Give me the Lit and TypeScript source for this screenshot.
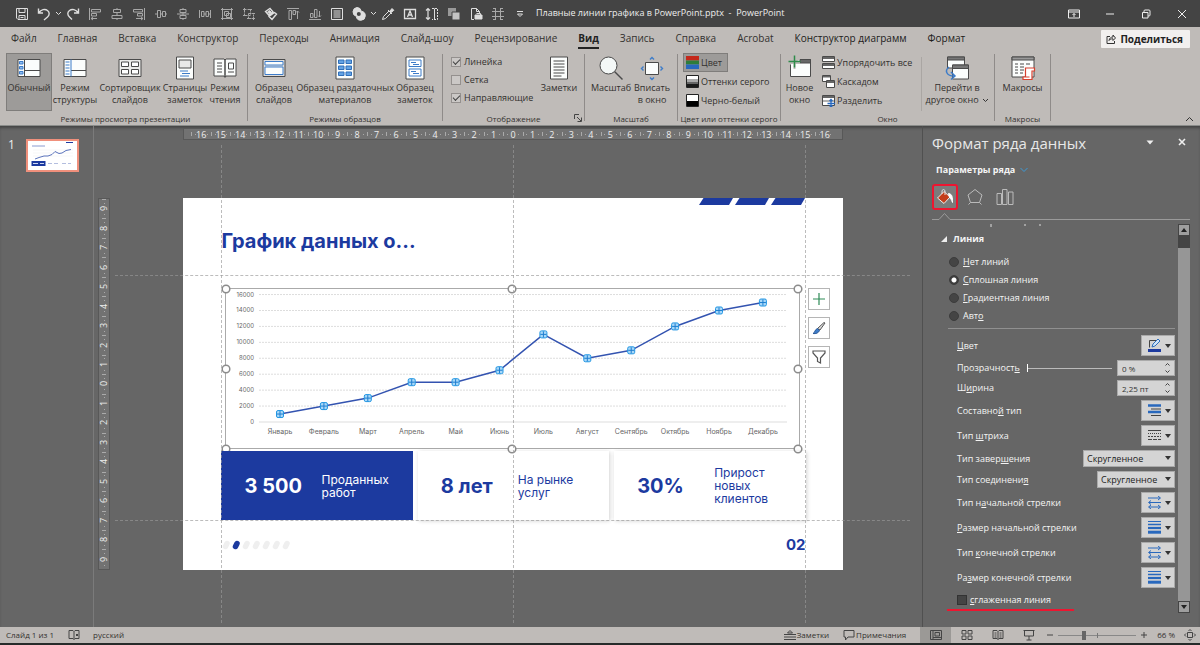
import { LitElement, html, svg, css } from "lit";
import { customElement, state } from "lit/decorators.js";
import { classMap } from "lit/directives/class-map.js";

const W = "#dedede";

/* Quick access toolbar glyphs, 14 x 14 */
const qat: Record<string, unknown> = {
  save: svg`<path d="M1.5 1.5h11v11H3l-1.5-1.5z M4 1.5v4h6v-4 M4 12.500V8.500h6v4 M5.500 10.500h3"/>`,
  undo: svg`<path d="M1.500 1.500v4.500h4.500 M2 5.500C4 2.500 8 1.500 10.500 3.500s2 4.500 0 6.500l-3.500 3" stroke-width="1.400"/>`,
  redo: svg`<path d="M12.500 1.500v4.500H8 M12 5.500C10 2.500 6 1.500 3.500 3.500s-2 4.500 0 6.500L6 12.500" stroke-width="1.400"/>`,
  alignLeft: svg`<path d="M1.500 1v12 M3.500 2.500h9v2.500h-9z M3.500 6.500h5v2.500h-5z M3 11.500h6 M5 10l-2 1.500 2 1.500"/>`,
  alignMid: svg`<path d="M7 1v1.500 M7 5.500v2.500 M7 11.500V13 M3.500 2.500h7v3h-7z M2 8.500h10v3H2z"/>`,
  alignRight: svg`<path d="M12.500 1v12 M1.500 2.500h9v2.500h-9z M5.500 6.500h5v2.500h-5z M4 11.500h7 M9 10l2 1.500-2 1.500"/>`,
  centerV: svg`<path d="M1 7h2 M11.500 7H13 M3.500 3.500h3v7h-3z M8.500 4.500h3v5h-3z M6.500 7h2"/>`,
  centerH: svg`<path d="M7 1v1.500 M7 11.500V13 M4 2.500h6v3H4z M4 8.500h6v3H4z M7 5.500v3 M1 7h12"/>`,
  distribute: svg`<path d="M1.500 3v8 M12.500 3v8 M3.500 4.500h2.500v5H3.500z M8 4.500h2.500v5H8z M6 7h2 M11 7h2"/>`,
  group: svg`<path d="M2.500 2.500h9v9h-9z M4.500 4.500h4v4h-4z M6.500 6.500h4v4h-4z M1 2.500h3 M2.500 1v3 M10 2.500h3 M11.500 1v3 M1 11.500h3 M2.500 10v3 M10 11.500h3 M11.500 10v3"/>`,
  ungroup: svg`<path d="M2.500 2.500h6v6h-6z M6.500 6.500h5v5h-5z" stroke-dasharray="2 1"/><path d="M1 2.500h3 M2.500 1v3 M7 2.500h3 M10 11.500h3 M11.500 10v3 M5 11.500h3 M1 8.500h3 M10 6.500h3"/>`,
  paint: svg`<path d="M1.500 4.500L6 1.500l3 3.500-4 3.500z M5 9.500l3 3 4.500-5.500-2-1.500z" stroke-width="1.400"/><path d="M3.500 5l2-1.500 2 2L5.500 7z" fill="${W}"/>`,
  alignTop: svg`<path d="M1 1.500h12 M3 3.500h2.500v9H3z M7 3.500h2.500v4H7z M11.500 12V4 M10 5.500L11.500 4 13 5.500"/>`,
  alignBottom: svg`<path d="M1 12.500h12 M2.500 6.500H5v4H2.500z M6.500 2.500H9v8H6.500z M11.500 4v6 M10 8.500l1.500 1.500L13 8.500"/>`,
  textbox: svg`<path d="M1.500 1.500h11v11h-11z M3.500 4h7 M3.500 6h7 M3.500 8h7 M3.500 10h7"/>`,
  shapes: svg`<path d="M5 .5a4.500 4.500 0 0 1 4.300 3.800a4.500 4.500 0 1 1-5 5A4.500 4.500 0 0 1 5 .5z" fill="${W}"/><circle cx="6.800" cy="7" r="2" fill="#444" stroke="none"/>`,
  dropper: svg`<path d="M1.500 12.500l1-3 5.500-5.500 2 2-5.500 5.500z M7 3l4 4" /><path d="M8.500 4.500l2.500-3 1.800 1.800-3 2.500z" fill="${W}"/>`,
  textA: svg`<path d="M1.500 2.500h11v9h-11z M4.500 10L7 4l2.500 6 M5.500 8h3" stroke-width="1.300"/>`,
  size: svg`<path d="M3 1.500v11 M1 3.500l2-2 2 2 M1 10.500l2 2 2-2" stroke-width="1.200"/><path d="M7 1.500h5.500v11H7" stroke-dasharray="2 1"/><path d="M9.500 1.500v11"/>`,
  layers: svg`<path d="M1 1h8v8H1z" fill="#999" stroke="none"/><path d="M5 5h8v8H5z" fill="#c4c4c4" stroke="#444"/>`,
  docPrint: svg`<path d="M5 12.500H2.500v-11h5l3 3V6 M7.500 1.500v3h3"/><path d="M6 8h7v4H6z" fill="${W}"/><path d="M7.500 6.500h4v2"/>`,
  grid: svg`<path d="M1 4.500h12 M1 9.500h12 M4.500 1v12 M9.500 1v12 M2 1.500h3 M2 12.500h3 M9 1.500h3 M9 12.500h3"/>`,
};
const muted = new Set(["alignLeft", "alignMid", "alignRight", "centerV", "centerH", "distribute", "group", "ungroup", "alignTop", "alignBottom", "grid"]);

/* Ribbon glyphs on a 24 x 24 field */
const O = "#4a4a4a";
const B = "#3d7cc9";
const big: Record<string, unknown> = {
  normal: svg`<path d="M1 3.500h22v17H1z" fill="#fbfdfc" stroke="${O}"/><path d="M7.500 3.500v17 M7.500 14.500H23" stroke="${O}"/><path d="M2.500 5.500h3.500v2.500H2.500z M2.500 10.500h3.500v2.500H2.500z M2.500 15.500h3.500v2.500H2.500z" fill="#8dbcf0" stroke="${B}"/>`,
  outline: svg`<path d="M1 3.500h22v17H1z" fill="#fbfdfc" stroke="${O}"/><path d="M8 14.500H23" stroke="${O}"/><path d="M8 3.500v17 M2.500 6h4 M2.500 9h4 M2.500 12h4 M2.500 15h4 M2.500 18h4" stroke="${B}"/>`,
  sorter: svg`<path d="M1 3.500h22v17H1z" fill="#ececea" stroke="${O}"/><path d="M3.500 6h7v4.500h-7z M13.500 6h7v4.500h-7z M3.500 13.500h7V18h-7z M13.500 13.500h7V18h-7z" fill="#fff" stroke="${O}"/>`,
  notes: svg`<path d="M3.500 1h17v22h-17z" fill="#fbfdfc" stroke="${O}"/><path d="M6 4h12v8H6z" fill="#e8e8e8" stroke="${O}"/><path d="M7 15h8 M9 17.500h8 M7 20h9" stroke="${B}"/>`,
  reading: svg`<path d="M1 3h10l1 1 1-1h10v17H13l-1 1.500-1-1.500H1z" fill="#fbfdfc" stroke="${O}"/><path d="M12 4v17" stroke="${O}" stroke-width="1.500"/><path d="M4 7h5 M4 10h5 M4 13h5 M4 16h5 M15.500 7h5v6h-5z M15 16h6" stroke="${O}"/>`,
  master: svg`<path d="M1 3.500h22v17H1z" fill="#ddd" stroke="${O}"/><path d="M3 5.500h18V9H3z M3 11h18v7.500H3z" fill="#fbfdfc" stroke="${B}"/>`,
  handout: svg`<path d="M3 1h18v22H3z" fill="#fbfdfc" stroke="${O}"/><path d="M5.500 4h5.500v3.500H5.500z M13 4h5.500v3.500H13z M5.500 10h5.500v3.500H5.500z M13 10h5.500v3.500H13z M5.500 16h5.500v3.500H5.500z M13 16h5.500v3.500H13z" fill="#62a2e4" stroke="#2f6fba"/>`,
  notesMaster: svg`<path d="M3 1h18v22H3z" fill="#fbfdfc" stroke="${O}"/><path d="M6 4h12v6.500H6z M6 13h12v7H6z" fill="#fff" stroke="${B}"/><path d="M8 6.500h5 M10 8.500h6 M8 15.500h5 M10 17.500h6" stroke="${B}"/>`,
  page: svg`<path d="M3.500 1h17v22h-17z" fill="#fbfdfc" stroke="${O}"/><path d="M6.500 5h11 M6.500 8h11 M6.500 11h11 M6.500 14h11 M6.500 17h11 M6.500 20h8" stroke="${O}"/>`,
  zoom: svg`<path d="M15.500 15.500l8 8" stroke="${O}" stroke-width="1.500"/><circle cx="9.500" cy="9.500" r="8.500" fill="#f4f8f7" stroke="${O}"/>`,
  fit: svg`<path d="M5.500 6.500h13v12h-13z" fill="#fbfdfc" stroke="${O}"/><path d="M10 3.500l2-2 2 2 M10 21.500l2 2 2-2 M3.500 10.500l-2 2 2 2 M20.500 10.500l2 2-2 2" stroke="${B}" stroke-width="1.400"/>`,
  newWin: svg`<path d="M2.500 8.500V20.500h20V3.500H12" fill="#fbfdfc" stroke="${O}"/><path d="M12 3.500h10.500v3.500H12z" fill="#666" stroke="${O}"/><path d="M-1 5.500H12V8H7.500v5h-2V8H-1z" fill="#bfbbb8"/><path d="M6.500 -.5v12 M.5 5.500h12" stroke="#2e8b4a" stroke-width="1.500"/>`,
  switchWin: svg`<path d="M2.500 1h17v11h-17z" fill="#fbfdfc" stroke="${O}"/><path d="M2.500 1h17v3h-17z" fill="#777" stroke="${O}"/><path d="M7.500 9h16v14h-16z" fill="#fbfdfc" stroke="${O}"/><path d="M7.500 9h16v3.500h-16z" fill="#777" stroke="${O}"/><path d="M4 11c-5 4-2 9 5 9 M6 16l4 4-4 3.500" stroke="${B}" stroke-width="1.500"/>`,
  macro: svg`<path d="M1 1h22v20H1z" fill="#fbfdfc" stroke="${O}"/><path d="M1 1h22v3H1z" fill="#999" stroke="${O}"/><path d="M4 8h3 M9 8h4 M15 8h4 M4 11h3 M9 11h4 M4 14h3 M9 14h4 M4 17h3 M9 17h3" stroke="${O}"/><path d="M14.500 12h9v3h-2.500v8.500h-9V21h2.500z M14.500 21h4" fill="#fff" stroke="#d8402f" stroke-width="1.200"/>`,
};

/* Small ribbon glyphs on a 13 x 13 field */
const small: Record<string, unknown> = {
  color: svg`<path d="M0 0h13v4.500H0z" fill="#c4281b"/><path d="M0 4.500h13v4H0z" fill="#2e7d3a"/><path d="M0 8.500h13V13H0z" fill="#2868bd"/>`,
  gray: svg`<path d="M.5.5h12v12H.5z" fill="#fff" stroke="#222"/><path d="M1 4h11v3H1z" fill="#aaa"/><path d="M1 7h11v2H1z" fill="#666"/><path d="M1 9h11v3H1z" fill="#1a1a1a"/>`,
  bw: svg`<path d="M.5.5h12v12H.5z" fill="#fff" stroke="#222"/><path d="M1 7h11v5H1z" fill="#000"/>`,
  arrange: svg`<path d="M.5.5h12v5H.5z M.5 7.500h12v5H.5z" fill="#fff" stroke="${O}"/><path d="M1 1h11v2H1z M1 8h11v2H1z" fill="#666"/>`,
  cascade: svg`<path d="M.5.500h8v6h-8z M4.500 5.500h8v7h-8z" fill="#fff" stroke="${O}"/><path d="M1 1h7v1.500H1z M5 6h7v2H5z" fill="#666"/>`,
  split: svg`<path d="M.5 1.500h12v10H.5z" fill="#fff" stroke="${O}"/><path d="M1 2h11v2H1z M1 6.500h11v1H1z" fill="#666"/><path d="M9 5.500v7.500 M5.500 9.500H13 M7.500 7L9 5.500 10.500 7 M7.500 11.500L9 13l1.500-1.500" fill="none" stroke="#2868bd" stroke-width="1.300"/>`,
};

const caret = html`<svg class="caret" viewBox="0 0 6 4"><path d="M0 0h6L3 4z" fill="#333" /></svg>`;
const chevron = (c: string) => html`<svg class="chev" viewBox="0 0 7 5"><path d="M1 1l2.500 2.500L6 1" fill="none" stroke="${c}" /></svg>`;

const months = ["Январь", "Февраль", "Март", "Апрель", "Май", "Июнь", "Июль", "Август", "Сентябрь", "Октябрь", "Ноябрь", "Декабрь"];
const values = [1000, 2000, 3000, 5000, 5000, 6500, 11000, 8000, 9000, 12000, 14000, 15000];

@customElement("app-root")
export class AppRoot extends LitElement {
  @state() private line = 1;

  static styles = css`
    :host { display: flex; flex-direction: column; height: 100vh; min-height: 640px; overflow: hidden; background: #666; color: #33312f; font: 9px/12px "Open Sans", "Noto Sans", sans-serif; }
    * { box-sizing: border-box; }
    button, input, select { font: inherit; color: inherit; margin: 0; padding: 0; border: 0; background: none; border-radius: 0; }
    svg { display: block; flex: none; }
    .caret { width: 6px; height: 4px; }
    .chev { width: 7px; height: 5px; }

    .titlebar { flex: none; height: 27px; background: #444; color: #eee; display: flex; align-items: center; padding-left: 11px; }
    .qat { display: flex; align-items: center; }
    .qat button { width: 22px; height: 22px; display: grid; place-items: center; }
    .qat .drop { width: 7px; }
    .qat svg.g { width: 14px; height: 14px; fill: none; stroke: #dedede; }
    .qat svg.muted { stroke: #a8a8a8; }
    .doc { margin: 0 0 2px 5px; flex: 1; white-space: nowrap; }
    .win { display: flex; }
    .win button { width: 36px; height: 26px; display: grid; place-items: center; }
    .win svg { width: 12px; height: 12px; fill: none; stroke: #eee; }

    .tabs { flex: none; height: 24px; background: #bfbbb8; display: flex; align-items: center; gap: 21px; padding: 0 10px 0 11px; font-size: 10px; line-height: 14px; white-space: nowrap; }
    .tabs a { color: #33312f; text-decoration: none; padding: 2px 0; border-bottom: 2px solid transparent; }
    .tabs a.on { font-weight: 700; color: #222; border-bottom-color: #222; }
    .tabs a.ctx { color: #1d1c1b; }
    .share { margin-left: auto; height: 18px; padding: 0 7px 0 5px; background: #f2f0ef; color: #222; font-weight: 700; display: flex; align-items: center; gap: 4px; border-radius: 1px; }
    .share svg { width: 10px; height: 10px; fill: none; stroke: #333; }

    .ribbon { flex: none; height: 75px; background: #bfbbb8; display: flex; padding: 2px 6px 3px 4px; border-bottom: 1px solid #8a8c8a; }
    .group { position: relative; display: flex; flex-direction: column; border-right: 1px solid #8f8b89; margin: 1px 0; padding: 0 2px; }
    .group .body { flex: 1; display: flex; margin-top: -1px; }
    .group h2 { margin: 0 0 -4px; font: 8px/12px "Open Sans", sans-serif; text-align: center; white-space: nowrap; }
    .g1 { width: 244px; } .g2 { width: 195px; } .g3 { width: 142px; } .g4 { width: 93px; }
    .g5 { width: 103px; } .g6 { width: 214px; } .g7 { width: 56px; }
    .big { height: 58px; border: 1px solid transparent; display: flex; flex-direction: column; align-items: center; gap: 2px; padding-top: 2px; white-space: nowrap; overflow: visible; }
    .big svg.b { width: 24px; height: 24px; fill: none; overflow: visible; }
    .big .lb { display: flex; justify-content: center; align-items: center; gap: 3px; }
    .big.on { background: #9d9b99; border-color: #7f7d7b; }
    .w34 { width: 34px; } .w44 { width: 44px; } .w46 { width: 46px; } .w48 { width: 48px; } .w64 { width: 64px; } .w94 { width: 94px; } .w72 { width: 72px; } .w52 { width: 52px; }
    .checks { display: flex; flex-direction: column; gap: 6px; padding: 3px 0 0 6px; width: 92px; }
    .checks label { display: flex; align-items: center; gap: 3px; height: 12px; white-space: nowrap; }
    .checks input { appearance: none; width: 10px; height: 10px; border: 1px solid #94908e; background: #cbc8c6; display: grid; place-items: center; }
    .checks input:checked::after { content: ""; width: 6px; height: 3px; border: solid #444; border-width: 0 0 1px 1px; transform: rotate(-45deg); margin-top: -2px; }
    .launch { position: absolute; right: 2px; bottom: -1px; width: 8px; height: 8px; }
    .launch svg { width: 8px; height: 8px; fill: none; stroke: #444; }
    .list { display: flex; flex-direction: column; align-items: flex-start; padding: 0 3px 0; }
    .list button { height: 19px; display: flex; align-items: center; gap: 2px; padding: 0 5px 0 2px; white-space: nowrap; border: 1px solid transparent; }
    .list button.on { background: #9d9b99; border-color: #7f7d7b; }
    .list svg { width: 13px; height: 13px; }
    .sep { width: 1px; margin: 4px 0 2px auto; background: #aaa6a3; }
    .collapse { margin: auto 0 -1px auto; width: 9px; height: 9px; }
    .collapse svg { width: 9px; height: 6px; fill: none; stroke: #333; }

    .work { flex: 1; min-height: 0; display: grid; grid-template-columns: 94px 1fr 278px; box-shadow: inset 0 3px 3px -1px #444; }
    .thumbs { display: flex; align-items: flex-start; gap: 11px; padding: 13px 0 0 8px; color: #eee; border-right: 1px solid #7b7b7b; font-size: 12px; line-height: 12px; }
    .thumb { width: 53px; height: 33px; border: 2px solid #f0907c; background: #fff; padding: 1px; }
    .thumb svg { width: 47px; height: 27px; }

    .canvas { min-width: 0; display: grid; grid-template: 19px 1fr / 20px 1fr; padding: 0 12px 4px 2px; }
    .hr { grid-column: 2; justify-self: center; width: 83%; height: 12px; margin-top: 2px; }
    .vr { grid-row: 2; align-self: center; height: 372px; width: 12px; margin-left: 2px; }
    .hr, .vr { display: flex; background: #727272; border: 1px solid #585858; color: #eee; font: 9px/9px "Open Sans", sans-serif; }
    .hr { padding: 0 7px; }
    .vr { flex-direction: column; }
    .hr span, .vr span { flex: 1 1 0; min-width: 0; min-height: 0; display: flex; align-items: center; justify-content: center; background-repeat: no-repeat; background-image: linear-gradient(#aaa, #aaa), linear-gradient(#aaa, #aaa), linear-gradient(#aaa, #aaa); }
    .hr span { background-size: 1px 4px, 1px 1px, 1px 1px; background-position: 0 50%, 20% 50%, 82% 50%; }
    .vr span { background-size: 4px 1px, 1px 1px, 1px 1px; background-position: 50% 0, 50% 20%, 50% 82%; }
    .vr i { font-style: normal; transform: rotate(-90deg); }
    .stage { grid-area: 2 / 2; display: flex; align-items: center; justify-content: center; }
    .slide { position: relative; width: 83%; aspect-ratio: 659 / 372; background: #fff; color: #1c3a9f; font-family: Inter, "Open Sans", sans-serif; display: flex; flex-direction: column; padding: 0 37px 0 38px; }
    .stripes { align-self: flex-end; display: flex; gap: 2px; margin-right: 1px; }
    .stripes svg { width: 34px; height: 7px; }
    .slide h1 { margin: 23px 0 0; font-size: 20px; line-height: 26px; font-weight: 700; white-space: nowrap; }
    .chart { margin: 34px 6px 0 4px; border: 1px solid #aaa; }
    .chart svg { width: 100%; overflow: visible; }
    .axis { font: 6px Inter, sans-serif; fill: #666; }
    .month { font: 7px Inter, sans-serif; fill: #666; }
    .stats { display: grid; grid-template-columns: 1fr 1fr 1fr; gap: 5px; margin-top: 2px; }
    .stat { height: 69px; display: grid; grid-template-columns: 77px 1fr; align-items: center; padding-left: 23px; box-shadow: 1px 1px 4px rgba(0,0,0,.18); font-size: 12px; line-height: 13px; }
    .stat b { font-size: 20px; line-height: 24px; font-weight: 700; white-space: nowrap; }
    .stat.fill { background: #1c3a9f; color: #fff; box-shadow: none; }
    .foot { display: flex; justify-content: space-between; align-items: center; margin-top: 15px; height: 20px; font-size: 15px; font-weight: 700; }
    .dots { display: flex; gap: 1px; padding-left: 1px; }
    .dots svg { width: 9px; height: 10px; overflow: visible; }
    .guide { position: absolute; opacity: .65; }
    .v { top: -53px; bottom: -53px; border-left: 1px dashed #999; }
    .h { left: -68px; right: -67px; border-top: 1px dashed #999; }
    .v1 { left: 38px; } .v2 { left: 50%; } .v3 { right: 37px; }
    .h1 { top: 77px; } .h2 { top: 322px; }
    .tools { position: absolute; left: calc(100% - 35px); top: 90px; display: grid; gap: 7px; }
    .tools button { width: 22px; height: 22px; background: #fff; border: 1px solid #b5b5b5; display: grid; place-items: center; }
    .tools svg { width: 14px; height: 14px; fill: none; }

    .panel { border-left: 1px solid #505050; padding: 7px 10px 0 9px; color: #f4f4f4; display: flex; flex-direction: column; min-width: 0; }
    .phead { display: flex; align-items: center; height: 21px; }
    .phead h2 { margin: 0; flex: 1; font-size: 15px; line-height: 21px; font-weight: 400; color: #e8e8e8; white-space: nowrap; }
    .phead button { width: 12px; height: 12px; display: grid; place-items: center; margin-bottom: 3px; }
    .phead button + button { margin: 0 2px 3px 20px; }
    .opt { align-self: flex-start; display: flex; align-items: center; gap: 5px; font-weight: 700; margin: 9px 0 0 4px; height: 14px; white-space: nowrap; }
    .ptabs { display: flex; gap: 4px; margin-top: 7px; }
    .ptabs button { width: 26px; height: 26px; display: grid; place-items: center; }
    .ptabs button.on { border: 2px solid #ee1530; border-radius: 3px; background: #7b7b7b; }
    .ptabs svg { width: 18px; height: 18px; fill: none; stroke: #bbb; }
    .notch { height: 9px; width: 100%; margin-top: 2px; }
    .notch svg { width: 100%; height: 9px; }
    .pbody { display: flex; justify-content: space-between; margin-top: 3px; height: 389px; }
    .form { flex: 1; padding: 0 3px 0 16px; }
    .cut { height: 4px; width: 100px; margin-left: 40px; }
    .form h3 { margin: 4px 0 10px -7px; font-size: 9px; line-height: 14px; font-weight: 700; display: flex; align-items: center; gap: 6px; }
    .form h3 svg { width: 6px; height: 6px; }
    .radios { display: grid; gap: 6px; padding-left: 1px; }
    .radios label { display: flex; align-items: center; gap: 4px; height: 12px; }
    .radios input { appearance: none; width: 10px; height: 10px; border-radius: 50%; background: #444; border: 1px solid #3c3c3c; }
    .radios input:checked { background: radial-gradient(circle, #fff 2px, #3c3c3c 3px); }
    hr { border: 0; height: 1px; background: #909090; margin: 6px 0 6px; }
    .rows { display: grid; gap: 4px; padding-left: 9px; }
    .row { display: flex; align-items: center; justify-content: space-between; white-space: nowrap; }
    .pick { width: 34px; height: 21px; background: #d4d4d4; border: 1px solid #aaa; display: flex; align-items: center; justify-content: space-between; padding: 0 3px 0 6px; }
    .pick svg:first-child { width: 13px; height: 13px; fill: none; }
    .num { width: 58px; height: 16px; background: #d4d4d4; border: 1px solid #aaa; color: #333; display: flex; align-items: center; font-size: 8px; }
    .num input { width: 46px; padding-left: 4px; height: 14px; }
    .num svg { width: 7px; height: 12px; fill: none; stroke: #444; }
    .slider { appearance: none; width: 85px; height: 12px; margin-left: auto; margin-right: 5px; background: linear-gradient(#bbb, #bbb) center / 100% 1px no-repeat; }
    .slider::-webkit-slider-thumb { appearance: none; width: 1px; height: 8px; background: #fff; }
    .sel { position: relative; height: 17px; display: grid; }
    .sel select { appearance: none; height: 17px; width: 78px; background: #d4d4d4; border: 1px solid #aaa; color: #222; padding-left: 3px; }
    .sel.wide select { width: 92px; }
    .sel .caret { position: absolute; right: 4px; top: 6px; pointer-events: none; }
    .smooth { display: inline-flex; align-items: center; gap: 3px; margin: 5px 0 0 -1px; padding: 0 23px 3px 10px; border-bottom: 2px solid #ee1530; white-space: nowrap; height: 18px; }
    .smooth input { appearance: none; width: 10px; height: 10px; background: #444; border: 1px solid #333; }
    .scroll { width: 12px; background: #969696; display: flex; flex-direction: column; margin-right: 0; }
    .scroll button { height: 12px; display: grid; place-items: center; background: #9e9e9e; border: 1px solid #444; }
    .scroll .knob { height: 12px; background: #444; }
    .scroll .track { flex: 1; }

    .status { flex: none; height: 18px; background: #bfbbb8; border-bottom: 2px solid #262b2a; display: flex; align-items: center; padding-left: 6px; font-size: 8px; white-space: nowrap; }
    .status button { display: flex; align-items: center; justify-content: center; gap: 1px; height: 16px; }
    .status svg { width: 12px; height: 12px; fill: none; stroke: #444; }
    .status .lang { margin-left: 13px; }
    .status .book { margin-left: 14px; }
    .status .n { margin-left: auto; }
    .status .c { margin: 0 14px 0 14px; }
    .status .view { width: 31px; }
    .view.on { background: #9b9996; }
    .status .zoomer { appearance: none; width: 78px; height: 12px; margin: 0 2px; background: linear-gradient(#777, #777) center / 1px 5px no-repeat, linear-gradient(#888, #888) center / 100% 1px no-repeat; }
    .status .zoomer::-webkit-slider-thumb { appearance: none; width: 4px; height: 9px; background: #666; }
    .pct { margin: 0 9px 0 7px; }
    .status .fitb { margin-right: 4px; }
  `;

  private big(icon: string, width: string, lines: string[], on = false, drop = false) {
    return html`<button class=${classMap({ big: true, [width]: true, on })}>
      <svg class="b" viewBox="0 0 24 24">${big[icon]}</svg>
      <span>${lines.map((l, i) => html`<span class="lb">${l}${drop && i === lines.length - 1 ? chevron("#333") : ""}</span>`)}</span>
    </button>`;
  }

  private small(icon: string, label: string, on = false) {
    return html`<button class=${classMap({ on })}><svg viewBox="0 0 13 13">${small[icon]}</svg>${label}</button>`;
  }

  private q(name: string, label: string) {
    return html`<button aria-label=${label}><svg class=${classMap({ g: true, muted: muted.has(name) })} viewBox="0 0 14 14">${qat[name]}</svg></button>`;
  }

  private titlebar() {
    const drop = html`<button class="drop" aria-label="Ещё">${chevron(W)}</button>`;
    return html`<header class="titlebar">
      <div class="qat">
        ${this.q("save", "Сохранить")}${this.q("undo", "Отменить")}${drop}${this.q("redo", "Повторить")}
        ${["alignLeft", "alignMid", "alignRight", "centerV", "centerH", "distribute", "group", "ungroup", "paint", "alignTop", "alignBottom", "textbox", "shapes"].map((n) => this.q(n, n))}
        ${drop}
        ${["dropper", "textA", "size", "layers", "docPrint", "grid"].map((n) => this.q(n, n))}
        <button aria-label="Настройка панели"><svg class="g" viewBox="0 0 14 14"><path d="M4 4.500h6" /><path d="M4.500 7h5L7 9.500z" /></svg></button>
      </div>
      <div class="doc">Плавные линии графика в PowerPoint.pptx&nbsp; -&nbsp; PowerPoint</div>
      <div class="win">
        <button aria-label="Лента"><svg viewBox="0 0 12 12"><path d="M.5 2h11v8H.5z M.5 4h11 M6 9V5.500 M4.500 7L6 5.500 7.500 7" /></svg></button>
        <button aria-label="Свернуть"><svg viewBox="0 0 12 12"><path d="M2 6h8" /></svg></button>
        <button aria-label="Восстановить"><svg viewBox="0 0 12 12"><path d="M2.500 4.500h5.500V10H2.500z M4 4.500V3q0-1 1-1h4q1 0 1 1v4q0 1-1 1H8" /></svg></button>
        <button aria-label="Закрыть"><svg viewBox="0 0 12 12"><path d="M2 2l8 8 M10 2l-8 8" /></svg></button>
      </div>
    </header>`;
  }

  private tabs() {
    const names = ["Файл", "Главная", "Вставка", "Конструктор", "Переходы", "Анимация", "Слайд-шоу", "Рецензирование", "Вид", "Запись", "Справка", "Acrobat", "Конструктор диаграмм", "Формат"];
    return html`<nav class="tabs">
      ${names.map((n, i) => html`<a href="#" class=${classMap({ on: n === "Вид", ctx: i > 11 })}>${n}</a>`)}
      <button class="share"><svg viewBox="0 0 10 10"><path d="M4 2.500H1v7h7.500V7 M3 6.500C3.500 4 5 3 7 3V1l2.500 3L7 6.500V4.800C5 4.800 4 5.200 3 6.500z" /></svg>Поделиться</button>
    </nav>`;
  }

  private ribbon() {
    return html`<div class="ribbon">
      <section class="group g1"><div class="body">
        ${this.big("normal", "w46", ["Обычный"], true)}${this.big("outline", "w46", ["Режим", "структуры"])}${this.big("sorter", "w64", ["Сортировщик", "слайдов"])}${this.big("notes", "w46", ["Страницы", "заметок"])}${this.big("reading", "w34", ["Режим", "чтения"])}
      </div><h2>Режимы просмотра презентации</h2></section>
      <section class="group g2"><div class="body">
        ${this.big("master", "w48", ["Образец", "слайдов"])}${this.big("handout", "w94", ["Образец раздаточных", "материалов"])}${this.big("notesMaster", "w46", ["Образец", "заметок"])}
      </div><h2>Режимы образцов</h2></section>
      <section class="group g3"><div class="body">
        <div class="checks">
          <label><input type="checkbox" checked />Линейка</label>
          <label><input type="checkbox" />Сетка</label>
          <label><input type="checkbox" checked />Направляющие</label>
        </div>
        ${this.big("page", "w44", ["Заметки"])}
      </div><h2>Отображение</h2>
      <button class="launch" aria-label="Параметры"><svg viewBox="0 0 8 8"><path d="M.5 5V.5H5 M3 3l4 4 M7.500 3.500v4h-4" /></svg></button></section>
      <section class="group g4"><div class="body">
        ${this.big("zoom", "w48", ["Масштаб"])}${this.big("fit", "w34", ["Вписать", "в окно"])}
      </div><h2>Масштаб</h2></section>
      <section class="group g5"><div class="body"><div class="list">
        ${this.small("color", "Цвет", true)}${this.small("gray", "Оттенки серого")}${this.small("bw", "Черно-белый")}
      </div></div><h2>Цвет или оттенки серого</h2></section>
      <section class="group g6"><div class="body">
        ${this.big("newWin", "w34", ["Новое", "окно"])}
        <div class="list">${this.small("arrange", "Упорядочить все")}${this.small("cascade", "Каскадом")}${this.small("split", "Разделить")}</div>
        <div class="sep"></div>
        ${this.big("switchWin", "w72", ["Перейти в", "другое окно"], false, true)}
      </div><h2>Окно</h2></section>
      <section class="group g7"><div class="body">${this.big("macro", "w52", ["Макросы"])}</div><h2>Макросы</h2></section>
      <button class="collapse" aria-label="Свернуть ленту"><svg viewBox="0 0 9 6"><path d="M1 5l3.500-3.500L8 5" /></svg></button>
    </div>`;
  }

  private chart() {
    const x = (i: number) => 54 + i * 43.9;
    const y = (v: number) => 133 - (v / 2000) * 15.93;
    const pts = values.map((v, i) => `${x(i)},${y(v)}`).join(" ");
    const ends = [[0, 0], [286, 0], [572, 0], [0, 80], [572, 80], [0, 160], [286, 160], [572, 160]];
    return html`<div class="chart"><svg viewBox="0 0 572 159">
      ${[0, 1, 2, 3, 4, 5, 6, 7, 8].map((n) => svg`
        <text class="axis" x="28" y=${y(n * 2000) + 2} text-anchor="end">${n * 2000}</text>
        <line x1="33" x2="561" y1=${y(n * 2000)} y2=${y(n * 2000)} stroke="#ddd" stroke-dasharray=${n ? "2 1" : "none"} />`)}
      <polyline points=${pts} fill="none" stroke="#3353b0" stroke-width="1.5" />
      ${values.map((v, i) => svg`
        <rect x=${x(i) - 3.5} y=${y(v) - 3.5} width="7" height="7" rx="1.500" fill="#a9d8f8" stroke="#2196e3" />
        <path d="M${x(i)} ${y(v) - 3}v6 M${x(i) - 3} ${y(v)}h6" stroke="#1f7fd0" />
        <text class="month" x=${x(i)} y="145" text-anchor="middle">${months[i]}</text>`)}
      ${ends.map(([cx, cy]) => svg`<circle cx=${cx} cy=${cy} r="3.800" fill="#fff" stroke="#8c8c8c" stroke-width="1.500" />`)}
    </svg></div>`;
  }

  private slide() {
    const stripe = html`<svg viewBox="0 0 34 7"><path d="M4.500 0H34l-4 7H0z" fill="#1c3a9f" /></svg>`;
    return html`<article class="slide">
      <div class="stripes">${stripe}${stripe}${stripe}</div>
      <h1>График данных о...</h1>
      ${this.chart()}
      <div class="stats">
        <div class="stat fill"><b>3 500</b><span>Проданных<br />работ</span></div>
        <div class="stat"><b>8 лет</b><span>На рынке<br />услуг</span></div>
        <div class="stat"><b>30%</b><span>Прирост<br />новых<br />клиентов</span></div>
      </div>
      <div class="foot">
        <div class="dots">${[0, 1, 2, 3, 4, 5, 6].map((i) => html`<svg viewBox="0 0 9 10"><path d="M5 3.500l-1.500 3" stroke=${i === 1 ? "#1c3a9f" : "#efefef"} stroke-width="5.500" stroke-linecap="round" /></svg>`)}</div>
        <span>02</span>
      </div>
      <div class="guide v v1"></div><div class="guide v v2"></div><div class="guide v v3"></div>
      <div class="guide h h1"></div><div class="guide h h2"></div>
      <div class="tools">
        <button aria-label="Элементы"><svg viewBox="0 0 14 14"><path d="M7 1v12 M1 7h12" stroke="#2e8b57" stroke-width="1.200" /></svg></button>
        <button aria-label="Стили"><svg viewBox="0 0 14 14"><path d="M5.500 7.500L12 1.500l1 .5-5 7z" fill="#ddd" stroke="#555" /><path d="M1 12.500c2-.5 1.500-4 4.500-5l2 2c-1 2.500-3.500 3.500-6.500 3z" fill="#3d7cc9" stroke="#2c5a99" /></svg></button>
        <button aria-label="Фильтры"><svg viewBox="0 0 14 14"><path d="M1 1h12v2L8.500 8v5l-3-1.500V8L1 3z" stroke="#555" stroke-width="1.200" /></svg></button>
      </div>
    </article>`;
  }

  private pick(icon: unknown, label: string) {
    return html`<button class="pick" aria-label=${label}><svg viewBox="0 0 13 13">${icon}</svg>${caret}</button>`;
  }

  private panel() {
    const compound = svg`<path d="M0 1.500h13 M0 8h13" stroke="#2868bd" stroke-width="2.500"/><path d="M3 5h10 M3 11.500h10" stroke="#444"/>`;
    const dash = svg`<path d="M0 1.500h13" stroke="#444"/><path d="M0 4.500h13" stroke="#444" stroke-dasharray="1 1"/><path d="M0 7.500h13" stroke="#444" stroke-dasharray="2 1"/><path d="M0 10.500h13" stroke="#444" stroke-dasharray="4 1"/>`;
    const arrows = svg`<path d="M0 2h12 M10 0l2.500 2L10 4 M1 6.500h12 M3 4.500L.5 6.500 3 8.500 M1 11h11 M3 9l-2.500 2L3 13 M10 9l2.500 2-2.500 2" stroke="#2868bd"/>`;
    const sizes = svg`<path d="M0 .5h13" stroke="#2868bd"/><path d="M0 3.500h13" stroke="#2868bd" stroke-width="1.500"/><path d="M0 7h13" stroke="#2868bd" stroke-width="2.200"/><path d="M0 11.200h13" stroke="#2868bd" stroke-width="3"/>`;
    const pen = svg`<path d="M8 1.500H1.500v7" stroke="#444"/><path d="M4 8l1-3 5-5 2 2-5 5z" fill="#cfe4fa" stroke="#2f6fba"/><path d="M0 11.500h13" stroke="#1c3a9f" stroke-width="3"/>`;
    const radios = [html`<u>Н</u>ет линий`, html`<u>С</u>плошная линия`, html`<u>Г</u>радиентная линия`, html`Авт<u>о</u>`];
    const steps = html`<svg viewBox="0 0 7 12"><path d="M1.500 3.500l2-2 2 2 M1.500 8.500l2 2 2-2" /></svg>`;
    return html`<aside class="panel">
      <div class="phead"><h2>Формат ряда данных</h2>
        <button aria-label="Параметры области"><svg width="8" height="5" viewBox="0 0 8 5"><path d="M.5.5h7L4 4.500z" fill="#eee" /></svg></button>
        <button aria-label="Закрыть"><svg width="8" height="8" viewBox="0 0 8 8"><path d="M1 1l6 6 M7 1L1 7" stroke="#eee" stroke-width="1.600" /></svg></button>
      </div>
      <button class="opt">Параметры ряда <svg width="8" height="6" viewBox="0 0 8 6"><path d="M.5 1L4 4.500 7.500 1" fill="none" stroke="#3c9ad6" /></svg></button>
      <div class="ptabs">
        <button class="on" aria-label="Заливка и границы"><svg viewBox="0 0 18 18"><path d="M1.500 10L8 3.500l6 5.500-6 6.500z" fill="#c43e1c" stroke="#eee" /><path d="M6 6V2.500q1.500-2 3 0V7" stroke="#ddd" /><path d="M12.500 5.500c4 .5 4 4 4 9-1-3-2-4-3-5z" fill="#fff" stroke="#fff" /></svg></button>
        <button aria-label="Эффекты"><svg viewBox="0 0 18 18"><path d="M9 1.500l7 5.500-2.500 7.500h-9L2 7z M2.500 16.500l2-2 M15.500 16.500l-2-2" /></svg></button>
        <button aria-label="Параметры ряда"><svg viewBox="0 0 18 18"><path d="M1 5.500h4.500v11H1z M6.500 1.500H11v15H6.500z M12.500 4H17v12.500h-4.500z" /></svg></button>
      </div>
      <div class="notch"><svg viewBox="0 0 258 9" preserveAspectRatio="xMinYMid slice"><path d="M0 7.500h7l5.500-6L18 7.500h240" fill="none" stroke="#9a9a9a" /></svg></div>
      <div class="pbody">
        <div class="form">
          <svg class="cut" viewBox="0 0 100 4"><path d="M3 0v3 M37 0v2 M52 0v2" stroke="#ddd" /></svg>
          <h3><svg viewBox="0 0 6 6"><path d="M6 0v6H0z" fill="#eee" /></svg>Линия</h3>
          <div class="radios">${radios.map((r, i) => html`<label><input type="radio" name="line" .checked=${this.line === i} @change=${() => (this.line = i)} /><span>${r}</span></label>`)}</div>
          <hr />
          <div class="rows">
            <div class="row"><span><u>Ц</u>вет</span>${this.pick(pen, "Цвет")}</div>
            <div class="row"><label for="tr">Прозрачност<u>ь</u></label><input class="slider" type="range" value="0" aria-label="Прозрачность" /><span class="num"><input id="tr" value="0 %" />${steps}</span></div>
            <div class="row"><label for="wd">Ш<u>и</u>рина</label><span class="num"><input id="wd" value="2,25 пт" />${steps}</span></div>
            <div class="row"><span>Составно<u>й</u> тип</span>${this.pick(compound, "Составной тип")}</div>
            <div class="row"><span>Тип <u>ш</u>триха</span>${this.pick(dash, "Тип штриха")}</div>
            <div class="row"><label for="cap">Тип завер<u>ш</u>ения</label><span class="sel wide"><select id="cap"><option>Скругленное</option></select>${caret}</span></div>
            <div class="row"><label for="join">Тип соединени<u>я</u></label><span class="sel"><select id="join"><option>Скругленное</option></select>${caret}</span></div>
            <div class="row"><span>Тип н<u>а</u>чальной стрелки</span>${this.pick(arrows, "Тип начальной стрелки")}</div>
            <div class="row"><span><u>Р</u>азмер начальной стрелки</span>${this.pick(sizes, "Размер начальной стрелки")}</div>
            <div class="row"><span>Тип <u>к</u>онечной стрелки</span>${this.pick(arrows, "Тип конечной стрелки")}</div>
            <div class="row"><span>Ра<u>з</u>мер конечной стрелки</span>${this.pick(sizes, "Размер конечной стрелки")}</div>
          </div>
          <label class="smooth"><input type="checkbox" /><span><u>с</u>глаженная линия</span></label>
        </div>
        <div class="scroll">
          <button aria-label="Вверх"><svg width="6" height="4" viewBox="0 0 6 4"><path d="M0 4h6L3 0z" fill="#222" /></svg></button>
          <div class="knob"></div><div class="track"></div>
          <button aria-label="Вниз"><svg width="6" height="4" viewBox="0 0 6 4"><path d="M0 0h6L3 4z" fill="#222" /></svg></button>
        </div>
      </div>
    </aside>`;
  }

  private status() {
    return html`<footer class="status">
      <span>Слайд 1 из 1</span>
      <button class="book" aria-label="Правописание"><svg viewBox="0 0 12 12"><path d="M1 1.500h4l1 1 1-1h4v8H7l-1 1-1-1H1z M6 2.500v8 M8 5l2 2 M10 5L8 7" /></svg></button>
      <span class="lang">русский</span>
      <button class="n"><svg viewBox="0 0 12 12"><path d="M0 5.500h12 M0 8h12 M0 10.500h12 M3.500 4L6 1.500 8.500 4z" /></svg>Заметки</button>
      <button class="c"><svg viewBox="0 0 12 12"><path d="M1 1.500h10v6.500H5l-2.500 3V8H1z" /></svg>Примечания</button>
      <button class="view on" aria-label="Обычный"><svg viewBox="0 0 12 12"><path d="M.5 1.500h11v9H.5z M3 1.500v9 M5 3.500h4.500v3.500H5z M3 8.500h8.500" /></svg></button>
      <button class="view" aria-label="Сортировщик"><svg viewBox="0 0 12 12"><path d="M1 1.500h4v3.500H1z M7 1.500h4v3.500H7z M1 7h4v3.500H1z M7 7h4v3.500H7z" /></svg></button>
      <button class="view" aria-label="Чтение"><svg viewBox="0 0 12 12"><path d="M1 1.500h4l1 1 1-1h4v8H7l-1 1-1-1H1z M6 2.500v8 M2.500 4h2 M2.500 6h2 M7.500 4h2 M7.500 6h2 M2.500 8h2 M7.500 8h2" /></svg></button>
      <button class="view" aria-label="Показ"><svg viewBox="0 0 12 12"><path d="M.5 1.500h11 M1.500 1.500v5.500h9V1.500 M6 7v4 M3.500 11h5" /></svg></button>
      <button aria-label="Уменьшить"><svg viewBox="0 0 12 12"><path d="M3 6h6" /></svg></button>
      <input class="zoomer" type="range" min="0" max="100" value="32" aria-label="Масштаб" />
      <button aria-label="Увеличить"><svg viewBox="0 0 12 12"><path d="M3 6h6 M6 3v6" /></svg></button>
      <span class="pct">66 %</span>
      <button class="fitb" aria-label="Вписать"><svg viewBox="0 0 12 12"><path d="M3.500 3.500h5v5h-5z M4.500 2L6 .5 7.500 2 M4.500 10L6 11.500 7.500 10 M2 4.500L.5 6 2 7.500 M10 4.500L11.500 6 10 7.500" /></svg></button>
    </footer>`;
  }

  render() {
    const hs = Array.from({ length: 33 }, (_, i) => Math.abs(i - 16));
    const vs = Array.from({ length: 19 }, (_, i) => Math.abs(i - 9));
    return html`
      ${this.titlebar()}${this.tabs()}${this.ribbon()}
      <main class="work">
        <nav class="thumbs"><span>1</span>
          <div class="thumb"><svg viewBox="0 0 47 27">
            <path d="M3 4h13" stroke="#8a9bd0" /><path d="M37 .5h7" stroke="#1c3a9f" />
            <path d="M4 8h40 M4 11h40 M4 14h40" stroke="#eee" stroke-width=".5" />
            <path d="M6 17l4-1.500 5-1.500h4l4-1.500 3-3 4 2 3-.5 4-2.500 5-1" fill="none" stroke="#5c74bd" />
            <path d="M2.500 19h14v5h-14z" fill="#1c3a9f" /><path d="M4 21.500h5 M11 21.500h4" stroke="#cfd8f2" /><path d="M19 21.500h4 M25 21.500h4 M33 21.500h4 M39 21.500h3" stroke="#b4bedf" />
          </svg></div>
        </nav>
        <div class="canvas">
          <div class="hr">${hs.map((n) => html`<span>${n}</span>`)}</div>
          <div class="vr">${vs.map((n) => html`<span><i>${n}</i></span>`)}</div>
          <div class="stage">${this.slide()}</div>
        </div>
        ${this.panel()}
      </main>
      ${this.status()}`;
  }
}
